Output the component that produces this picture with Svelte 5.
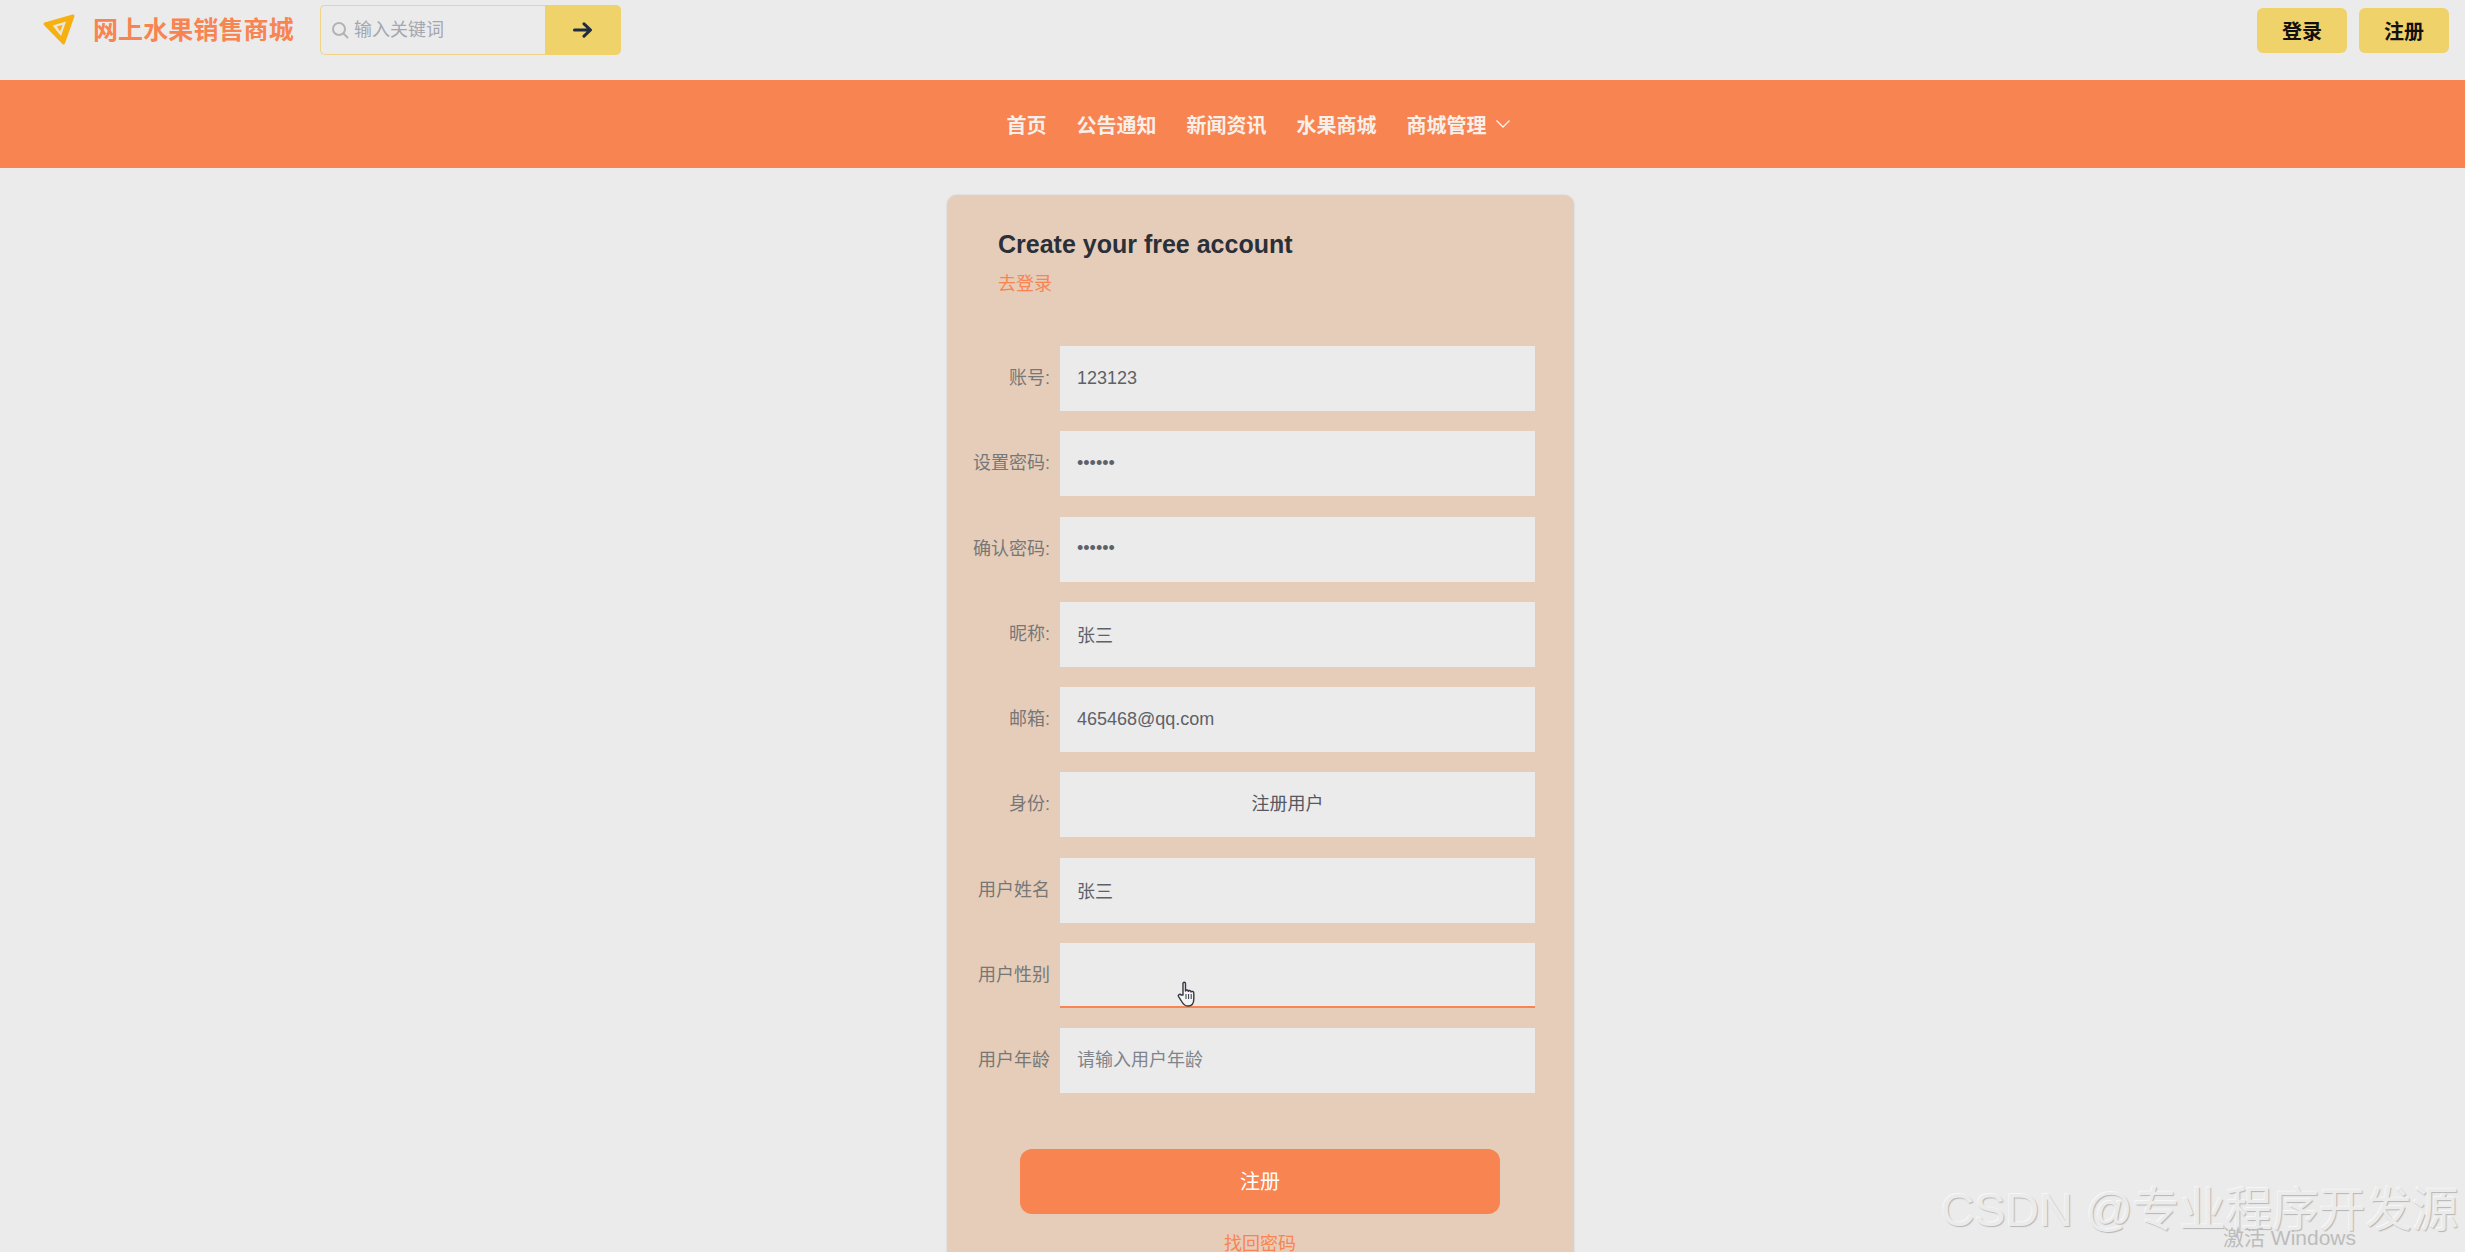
<script>
  const fields = [
    { label: '账号:', type: 'text', value: '123123' },
    { label: '设置密码:', type: 'password', value: '123123' },
    { label: '确认密码:', type: 'password', value: '123123' },
    { label: '昵称:', type: 'text', value: '张三' },
    { label: '邮箱:', type: 'text', value: '465468@qq.com' },
    { label: '身份:', type: 'select', value: '注册用户' },
    { label: '用户姓名', type: 'text', value: '张三' },
    { label: '用户性别', type: 'text', value: '', active: true },
    { label: '用户年龄', type: 'text', value: '', placeholder: '请输入用户年龄' }
  ];
  const navItems = ['首页', '公告通知', '新闻资讯', '水果商城'];
</script>

<div class="page">
  <header class="top">
    <div class="brand">
      <svg class="logo" viewBox="0 0 34 34" width="34" height="34" aria-hidden="true">
        <path d="M3 11 L31 3 L21.5 30 Z" fill="#f6b012" stroke="#f6b012" stroke-width="3" stroke-linejoin="round" />
        <path d="M10.5 12.5 L24 8.5 L19 23 Z" fill="#ebe6d8" />
        <path d="M15 13.5 L20.5 12 L18 18.5 Z" fill="#f6b012" />
      </svg>
      <span class="site">网上水果销售商城</span>
    </div>
    <div class="search">
      <div class="search-field">
        <svg viewBox="0 0 18 18" width="18" height="18" aria-hidden="true">
          <circle cx="8" cy="8" r="6" fill="none" stroke="#b1b3b6" stroke-width="2" />
          <path d="M12.5 12.5 L16.5 16.5" stroke="#b1b3b6" stroke-width="2" stroke-linecap="round" />
        </svg>
        <input placeholder="输入关键词" />
      </div>
      <button class="go" aria-label="搜索">
        <svg viewBox="0 0 20 16" width="20" height="16" aria-hidden="true">
          <path d="M1.5 8 H17 M11 1.8 L17.5 8 L11 14.2" fill="none" stroke="#1d2c40" stroke-width="3" stroke-linejoin="round" stroke-linecap="round" />
        </svg>
      </button>
    </div>
    <div class="auth">
      <button>登录</button>
      <button>注册</button>
    </div>
  </header>

  <nav class="nav">
    {#each navItems as item}
      <a href="#top">{item}</a>
    {/each}
    <a href="#top" class="more">商城管理
      <svg viewBox="0 0 16 10" width="16" height="10" aria-hidden="true">
        <path d="M1.5 1.5 L8 8 L14.5 1.5" fill="none" stroke="#f7f0ea" stroke-width="1.3" />
      </svg>
    </a>
  </nav>

  <main class="card">
    <h1>Create your free account</h1>
    <a class="login-link" href="#top">去登录</a>
    <form class="form">
      {#each fields as f}
        <div class="row">
          <label for={f.label}>{f.label}</label>
          {#if f.type === 'select'}
            <div class="select" id={f.label}><span>{f.value}</span></div>
          {:else}
            <input id={f.label} class:active={f.active} type={f.type} value={f.value} placeholder={f.placeholder ?? ''} />
          {/if}
        </div>
      {/each}
    </form>
    <button class="submit"><span>注册</span></button>
    <a class="forgot" href="#top">找回密码</a>
  </main>

  <svg class="cursor" viewBox="0 0 20 26" width="20" height="26" aria-hidden="true">
    <path d="M6 14 V2.5 C6 .8 8.5 .8 8.5 2.5 V10 C9 8.6 11 8.6 11.3 10.4 C11.8 9 13.8 9.2 14 11 C14.6 10 16.8 10.2 16.8 12.2 V18 C16.8 22 15 25 11 25 C7.5 25 6.5 23.5 5 21 L1.6 15.6 C.6 13.8 3 12.4 4.2 14 Z" fill="#f4f4f4" stroke="#33373f" stroke-width="1.4" stroke-linejoin="round" />
    <path d="M9 13 V18 M11.6 13 V18 M14.2 13 V18" stroke="#33373f" stroke-width="1" />
  </svg>
  <div class="csdn">CSDN @专业程序开发源</div>
  <div class="activate">激活 Windows</div>
</div>

<style>
  :global(body) {
    margin: 0;
    background: #ebebeb;
  }
  .page {
    position: relative;
    height: 1252px;
    overflow: hidden;
    background: #ebebeb;
    font-family: "Liberation Sans", "Noto Sans CJK SC", sans-serif;
    font-size: 18px;
  }
  .top {
    display: flex;
    align-items: flex-start;
    height: 80px;
    padding-left: 42px;
    padding-right: 16px;
    box-sizing: border-box;
  }
  .brand {
    display: flex;
    align-items: center;
    gap: 17px;
    height: 60px;
    margin-right: 26px;
  }
  .logo {
    display: block;
  }
  .site {
    color: #f88451;
    font-size: 25px;
    line-height: 30px;
    margin-bottom: 0;
    font-weight: 700;
    width: 201px;
    letter-spacing: 0.1px;
    white-space: nowrap;
  }
  .search {
    display: flex;
    width: 301px;
    height: 50px;
    margin-top: 5px;
  }
  .search-field {
    display: flex;
    align-items: center;
    gap: 5px;
    flex: 1;
    padding-left: 10px;
    border: 1px solid #efd388;
    border-right: 0;
    border-radius: 5px 0 0 5px;
    box-sizing: border-box;
    min-width: 0;
  }
  .search-field input {
    flex: 1;
    min-width: 0;
    border: 0;
    padding: 0;
    background: transparent;
    font: inherit;
  }
  .search-field input::placeholder {
    color: #a3a7af;
    opacity: 1;
  }
  .go {
    width: 76px;
    display: flex;
    align-items: center;
    justify-content: center;
    border: 0;
    padding: 0;
    background: #f0d26a;
    border-radius: 0 5px 5px 0;
  }
  .auth {
    display: flex;
    gap: 12px;
    margin-left: auto;
    margin-top: 8px;
  }
  .auth button {
    width: 90px;
    height: 45px;
    border: 0;
    border-radius: 6px;
    background: #f0d26a;
    color: #111;
    font: inherit;
    font-size: 20px;
    font-weight: 700;
  }
  .nav {
    display: flex;
    justify-content: center;
    align-items: center;
    gap: 30px;
    height: 88px;
    background: #f88451;
    padding-left: 52px;
  }
  .nav a {
    color: #f7f0ea;
    font-size: 20px;
    font-weight: 700;
    text-decoration: none;
    white-space: nowrap;
  }
  .more {
    display: flex;
    align-items: center;
    gap: 8px;
  }
  .card {
    width: 627px;
    height: 1100px;
    margin: 27px 0 0 947px;
    padding: 30px 39px 0 51px;
    box-sizing: border-box;
    background: #e6cdb9;
    border-radius: 10px;
    box-shadow: 0 0 2px #c9c9c9;
    display: flex;
    flex-direction: column;
  }
  h1 {
    margin: 0;
    color: #2a2f38;
    font-size: 25px;
    line-height: 38px;
    font-weight: 700;
  }
  .login-link {
    margin-top: 6px;
    color: #f88451;
    text-decoration: none;
    line-height: 30px;
    align-self: flex-start;
  }
  .form {
    display: flex;
    flex-direction: column;
    gap: 20px;
    margin-top: 47px;
    margin-left: -51px;
  }
  .row {
    display: grid;
    grid-template-columns: 103px 1fr;
    column-gap: 10px;
    align-items: center;
    height: 65.25px;
  }
  label {
    text-align: right;
    color: #777;
    white-space: nowrap;
    padding-bottom: 5px;
    padding-left: 2px;
  }
  .row input,
  .select {
    height: 65px;
    width: 475px;
    box-sizing: border-box;
    border: 0;
    margin: 0;
    padding: 0 17px 1px;
    background: #ebebeb;
    color: #5d6169;
    font: inherit;
    outline: none;
  }
  .row input::placeholder {
    color: #80848c;
    opacity: 1;
  }
  .row input.active {
    border-bottom: 2px solid #f88451;
  }
  .select {
    display: flex;
    align-items: center;
    justify-content: center;
    padding-right: 37px;
    color: #55585f;
  }
  .select span {
    margin-bottom: 4px;
  }
  .submit {
    width: 480px;
    height: 65px;
    margin: 56px 0 0 22px;
    border: 0;
    border-radius: 12px;
    background: #f88451;
    color: #fff;
    font: inherit;
    font-size: 20px;
    padding: 0 0 3px;
  }
  .forgot {
    margin: 15px 0 0 22px;
    width: 480px;
    text-align: center;
    color: #f88451;
    text-decoration: none;
  }
  .cursor {
    position: absolute;
    left: 1177px;
    top: 981px;
  }
  .csdn {
    position: absolute;
    left: 1941px;
    top: 1180px;
    white-space: nowrap;
    font-size: 46.5px;
    line-height: 60px;
    color: #ebebeb;
    text-shadow: 1px 1px 1px #b5b5b5, -1px -1px 0 #f7f7f7;
  }
  .activate {
    position: absolute;
    left: 2223px;
    top: 1225px;
    white-space: nowrap;
    font-size: 21px;
    line-height: 25px;
    color: #bcbcbc;
  }
</style>
